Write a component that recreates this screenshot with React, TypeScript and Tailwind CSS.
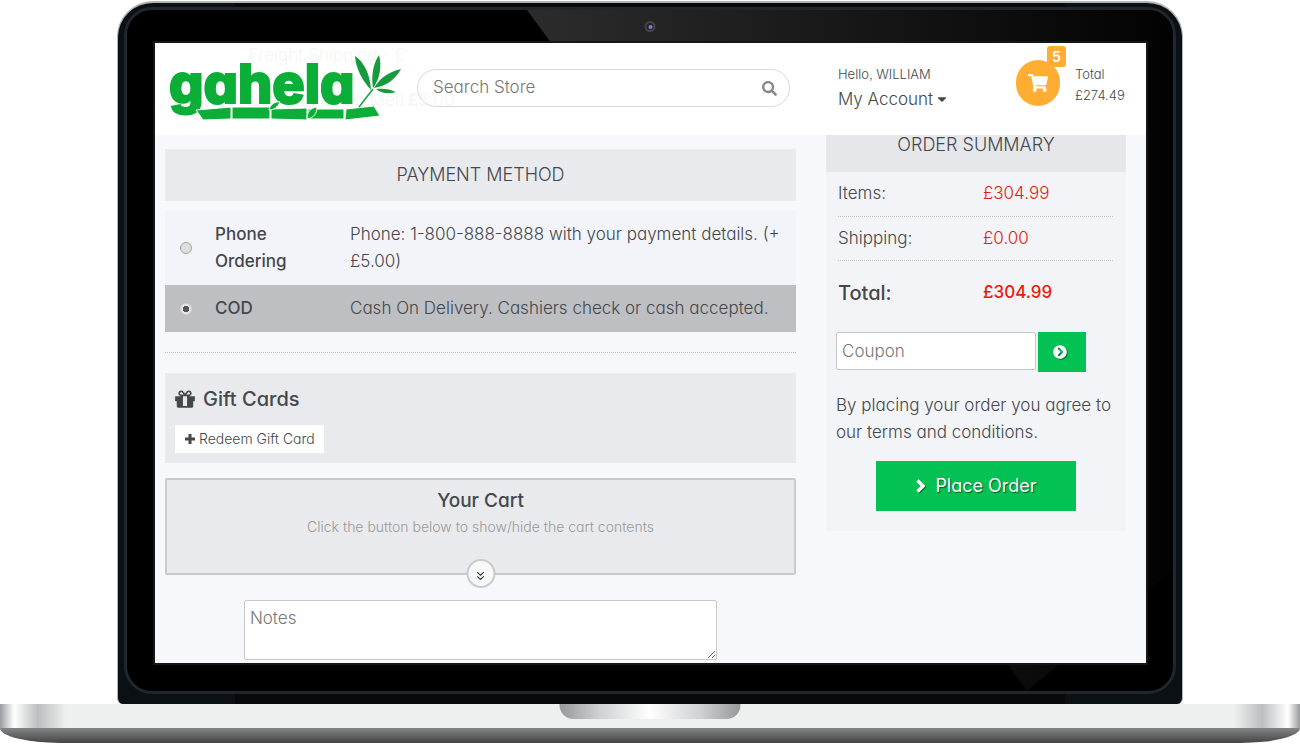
import React from "react";
import { FaSearch, FaCaretDown, FaShoppingCart, FaChevronCircleRight } from "react-icons/fa";
import { ChevronsDown } from "lucide-react";

function GiftIcon() {
  return (
    <svg viewBox="0 0 1536 1792" className="h-[23px] w-5" fill="currentColor" aria-hidden="true">
      <path d="M928 1356v-716h-320v716q0 25 18 38.500t46 13.500h192q28 0 46-13.500t18-38.500zM472 512h195l-126-161q-26-31-69-31-40 0-68 28t-28 68 28 68 68 28zm688-96q0-40-28-68t-68-28q-43 0-69 31l-125 161h194q40 0 68-28t28-68zm376 256v320q0 14-9 23t-23 9h-96v416q0 40-28 68t-68 28h-1088q-40 0-68-28t-28-68v-416h-96q-14 0-23-9t-9-23v-320q0-14 9-23t23-9h440q-93 0-158.500-65.500t-65.500-158.500 65.500-158.500 158.500-65.500q107 0 168 77l128 165 128-165q61-77 168-77 93 0 158.500 65.500t65.500 158.500-65.500 158.500-158.500 65.500h440q14 0 23 9t9 23z" />
    </svg>
  );
}

function PlusIcon() {
  return (
    <svg viewBox="0 0 12 12" className="size-3" stroke="currentColor" strokeWidth="3" aria-hidden="true">
      <path d="M6 1 V11 M1 6 H11" />
    </svg>
  );
}

function ChevronIcon() {
  return (
    <svg
      viewBox="0 0 12 16"
      className="h-4 w-3 drop-shadow-[1px_1px_0_rgba(0,0,0,0.4)]"
      fill="none"
      stroke="currentColor"
      strokeWidth="3.4"
      aria-hidden="true"
    >
      <path d="M2.500 2.500 L8 8 L2.500 13.500" />
    </svg>
  );
}

function Logo() {
  return (
    <a href="#" aria-label="gahela" className="block shrink-0">
      <svg viewBox="0 0 236 72" className="h-[72px] w-[236px] overflow-visible" fill="#0bae37">
        <text
          x="0"
          y="51"
          fontSize="54"
          fontWeight="800"
          stroke="#0bae37"
          strokeWidth="2"
          className="font-['Inter',sans-serif] [font-feature-settings:'cv11']"
        >
          gahela
        </text>
        <g stroke="#ffffff" strokeWidth="1">
          <path d="M27 58 L62 55 L62 67 L34 68 Z" />
          <path d="M63 55 H101 V67 H63 Z" />
          <path d="M102 57 L138 56 V68 L102 67 Z" />
          <path d="M139 57 H175 V67 H139 Z" />
          <path d="M177 57 L205 54 L211 64 L176 68 Z" />
          <path d="M100 58 C101 52 107 49 111 50 C109 55 105 58 100 58 Z" />
          <path d="M138 67 C138 60 141 56 148 55 C148 61 145 66 138 67 Z" />
        </g>
        <g fill="#159a3c">
          <path d="M186 4 C195 10 201 22 202 38 C193 28 187 17 186 4 Z" />
          <path d="M210 3 C213 14 211 27 204 36 C202 24 204 12 210 3 Z" />
          <path d="M232 17 C226 28 217 34 205 36 C210 27 219 20 232 17 Z" />
          <path d="M227 40 C220 42 213 42 207 37 C215 36 221 37 227 40 Z" />
          <path d="M204 37 L190 55" stroke="#159a3c" strokeWidth="1.4" />
        </g>
      </svg>
    </a>
  );
}

function Header() {
  return (
    <header className="relative flex h-[92px] bg-white pl-[14px]">
      <div aria-hidden="true" className="absolute left-[94px] top-0 text-[17px] leading-6 text-[#f5f5f5]">
        <p>Freight Shipping - £</p>
        <p className="mt-[21px] flex gap-1">
          Se20 Shipping Metl <span className="font-medium">£5.00</span>
        </p>
      </div>
      <div className="relative pt-[9px]">
        <Logo />
      </div>
      <form className="relative ml-3 mt-[26px] flex h-[38px] min-w-0 flex-1 items-center rounded-full border border-[#d9d9d9] bg-white/40 pl-[15px] pr-3">
        <input
          aria-label="Search Store"
          placeholder="Search Store"
          className="min-w-0 flex-1 bg-transparent text-[17px] outline-none placeholder:text-[#777]"
        />
        <button type="button" aria-label="Search" className="text-[#888]">
          <FaSearch size={15} />
        </button>
      </form>
      <div className="ml-12 mt-[19px] w-[178px] shrink-0">
        <p className="text-[13px] leading-6">Hello, WILLIAM</p>
        <button type="button" className="flex items-center gap-[2px] text-[17px] leading-[26px]">
          My Account <FaCaretDown size={14} />
        </button>
      </div>
      <a
        href="#"
        aria-label="Cart, 5 items"
        className="relative mt-[17px] flex h-[46px] w-11 shrink-0 items-center justify-center rounded-full bg-[#ffae33] text-white"
      >
        <FaShoppingCart size={20} />
        <span className="absolute -right-[6px] -top-[14px] flex h-[21px] w-[19px] items-center justify-center rounded-[3px] bg-[#ffae33] text-sm font-semibold">
          5
        </span>
      </a>
      <div className="ml-[15px] mt-[21px] w-[71px] shrink-0 text-[13px] leading-[21px]">
        <p>Total</p>
        <p>£274.49</p>
      </div>
    </header>
  );
}

interface MethodProps {
  name: string;
  text: string;
  checked?: boolean;
}

function Method({ name, text, checked = false }: MethodProps) {
  return (
    <label className={checked ? "flex items-center bg-[#bebfc3] py-[10px]" : "flex items-center bg-[#f3f4f9] py-[10px]"}>
      <input
        type="radio"
        name="payment"
        defaultChecked={checked}
        className="ml-[15px] size-3 shrink-0 appearance-none rounded-full border border-[#a5a5a5] bg-[#dedede] checked:border-[#cfcfcf] checked:bg-[radial-gradient(circle,#555_0_3px,#e6e6e6_3px)]"
      />
      <span className="ml-[23px] w-[135px] shrink-0 pr-10 font-medium">{name}</span>
      <span className="pr-3">{text}</span>
    </label>
  );
}

function Payment() {
  return (
    <main className="min-w-0 flex-1 pt-[14px]">
      <h2 className="bg-[#e9eaed] text-center text-lg leading-[52px]">PAYMENT METHOD</h2>
      <div className="mt-[10px] text-[17px] leading-[27px]">
        <Method name="Phone Ordering" text="Phone: 1-800-888-8888 with your payment details. (+ £5.00)" />
        <Method name="COD" text="Cash On Delivery. Cashiers check or cash accepted." checked />
      </div>
      <hr className="my-5 border-t border-dotted border-[#c4c4c4]" />
      <section className="bg-[#e9eaed] px-[10px] pb-[10px] pt-3">
        <h3 className="flex items-center gap-2 text-xl font-medium leading-7">
          <GiftIcon /> Gift Cards
        </h3>
        <button type="button" className="mt-3 flex h-7 items-center gap-[3px] bg-white px-[9px] text-sm">
          <PlusIcon /> Redeem Gift Card
        </button>
      </section>
      <section className="relative mt-[15px] h-[97px] rounded-[2px] border-2 border-[#c9cbcb] bg-[#e9eaed] pt-[9px] text-center">
        <h3 className="text-[19px] font-medium leading-6">Your Cart</h3>
        <p className="text-sm leading-7 text-[#999]">Click the button below to show/hide the cart contents</p>
        <button
          type="button"
          aria-label="Show or hide cart"
          className="absolute -bottom-[15px] left-1/2 flex size-[29px] -translate-x-1/2 items-center justify-center rounded-full border-2 border-[#c9cbcb] bg-[#f8f8f8] pt-1"
        >
          <ChevronsDown size={14} strokeWidth={2} />
        </button>
      </section>
      <textarea
        aria-label="Notes"
        placeholder="Notes"
        className="mx-auto mt-[25px] block h-[60px] w-3/4 rounded-[2px] border border-[#c8c8c8] bg-white px-[5px] py-[5px] text-[17px] outline-none placeholder:text-[#777]"
      />
    </main>
  );
}

function Summary() {
  return (
    <aside className="w-[300px] shrink-0 self-start bg-[#f3f4f8] pb-5">
      <h2 className="h-[37px] bg-[#e6e7ea] text-center text-lg leading-5">ORDER SUMMARY</h2>
      <dl className="ml-3 mr-[13px] text-[17px]">
        <div className="flex h-[45px] items-center border-b border-dotted border-[#c4c4c4]">
          <dt className="w-[145px]">Items:</dt>
          <dd className="text-[#e51c0c]">£304.99</dd>
        </div>
        <div className="flex h-11 items-center border-b border-dotted border-[#c4c4c4]">
          <dt className="w-[145px]">Shipping:</dt>
          <dd className="text-[#e51c0c]">£0.00</dd>
        </div>
        <div className="flex h-[63px] items-center font-medium">
          <dt className="w-[145px] text-xl">Total:</dt>
          <dd className="text-[#e51c0c]">£304.99</dd>
        </div>
      </dl>
      <form className="mx-[10px] mt-2 flex gap-[2px]">
        <input
          aria-label="Coupon"
          placeholder="Coupon"
          className="h-[38px] w-[200px] rounded-[2px] border border-[#c8c8c8] bg-white px-[5px] text-[17px] outline-none placeholder:text-[#777]"
        />
        <button type="button" aria-label="Apply coupon" className="flex h-10 w-12 items-center justify-center bg-[#03c153] pr-1 text-white">
          <FaChevronCircleRight size={14} className="drop-shadow-[1px_1px_0_rgba(0,0,0,0.4)]" />
        </button>
      </form>
      <p className="mx-[10px] mt-5 text-[17px] leading-[27px]">By placing your order you agree to our terms and conditions.</p>
      <button
        type="button"
        className="mx-auto mt-[15px] flex h-[50px] w-[200px] items-center justify-center gap-2 bg-[#03c153] text-lg font-normal text-white [text-shadow:1px_1px_1px_rgba(0,0,0,0.5)]"
      >
        <ChevronIcon />
        Place Order
      </button>
    </aside>
  );
}

export default function App() {
  return (
    <div className="flex min-h-screen flex-col items-center overflow-hidden bg-white pt-px">
      <div className="w-[82%] rounded-t-[36px] rounded-b-[6px] border border-b-0 border-t-2 border-[#aeb4b8] bg-[#0a1014] bg-[linear-gradient(90deg,#0a1014_0_11%,#08090b_11%_89%,#0a1014_89%)] px-[6px] pb-[10px] pt-1">
        <div className="relative rounded-[28px] border-[3px] border-[#20262b] bg-black pb-7 pl-7 pr-[27px] pt-[33px]">
          <svg
            aria-hidden="true"
            className="absolute inset-0 size-full rounded-[25px]"
            viewBox="0 0 1046 681"
            preserveAspectRatio="none"
          >
            <defs>
              <linearGradient id="glare" x1="0" y1="0" x2="1" y2="0">
                <stop offset="0" stopColor="#2c2c2c" />
                <stop offset="0.5" stopColor="#171717" />
                <stop offset="1" stopColor="#020202" />
              </linearGradient>
            </defs>
            <path d="M400 0 H1046 V560 L900 681 Z" fill="url(#glare)" />
          </svg>
          <div className="absolute left-1/2 top-[11px] flex size-[11px] -translate-x-1/2 items-center justify-center rounded-full border-2 border-[#464646] bg-[#222]">
            <span className="size-1 rounded-full bg-[#7a7ff0]" />
          </div>
          <div className="relative overflow-hidden bg-[#f7f8fc] font-['Inter',sans-serif] font-light text-[#44484b] outline-2 outline-[#161616] [font-feature-settings:'cv11','ss03']">
            <Header />
            <div className="flex gap-[30px] pb-[3px] pl-[10px] pr-5">
              <Payment />
              <Summary />
            </div>
          </div>
        </div>
      </div>
      <div className="relative w-full">
        <div className="h-6 bg-[linear-gradient(90deg,#9a9b9d_0,#fff_14px,#bdbec0_38px,#eef0ef_66px,#eef0ef_calc(100%-66px),#bdbec0_calc(100%-38px),#fff_calc(100%-12px),#9a9b9d_100%)]" />
        <div className="h-[15px] bg-[linear-gradient(#848587,#444446)] [border-bottom-left-radius:60px_15px] [border-bottom-right-radius:60px_15px]" />
        <div className="absolute left-1/2 top-0 h-[15px] w-[181px] -translate-x-1/2 rounded-b-[14px] bg-[linear-gradient(90deg,#97989a,#cfd0d2_22%,#fff_50%,#cfd0d2_78%,#97989a)]" />
      </div>
    </div>
  );
}
